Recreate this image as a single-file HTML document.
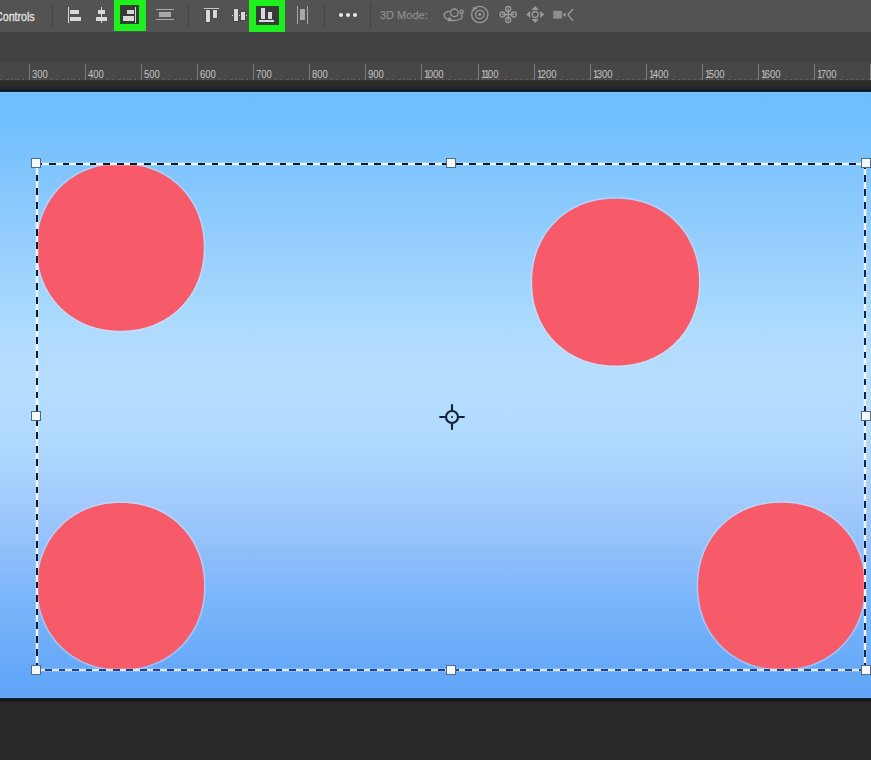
<!DOCTYPE html><html><head><meta charset="utf-8"><style>
*{margin:0;padding:0;box-sizing:border-box}
html,body{width:871px;height:760px;overflow:hidden;background:#282828;font-family:"Liberation Sans",sans-serif}
.a{position:absolute}
#tb{left:0;top:0;width:871px;height:32px;background:#535353}
#b2{left:0;top:32px;width:871px;height:31px;background:#424242}
#ru{left:0;top:63px;width:871px;height:17px;background:#474747}
#db{left:0;top:80px;width:871px;height:9px;background:linear-gradient(#323232 0,#323232 1px,#2b2b2b 1px,#2b2b2b 6px,#282526 6px,#282526 7px,#262626 7px)}
#rd{left:0;top:79px;width:871px;height:1px;background:repeating-linear-gradient(90deg,#626262 0 2px,transparent 2px 5.6px)}
#nl{left:0;top:89px;width:871px;height:3px;background:linear-gradient(#141c24,#0c2033)}
#cv{left:0;top:92px;width:871px;height:606px;background:linear-gradient(#6ebdfd 0%,#70befd 4%,#98cffd 26.4%,#a9dafe 37%,#b1dbfe 41%,#b6ddfe 46.7%,#b4dcfe 52.3%,#b0d9fe 57.4%,#a3cbfc 67.5%,#8cbdfa 77.2%,#7ab5fa 83.8%,#5ea4f8 100%)}
#nl2{left:0;top:698px;width:871px;height:2px;background:#0b1d2d}
#dk2{left:0;top:700px;width:871px;height:2px;background:#1b1c1d}
#lt{left:0;top:92px;width:871px;height:2px;background:#7cc1fc}
#lb{left:0;top:697px;width:871px;height:1px;background:#76abec}
#rb{left:0;top:702px;width:871px;height:2px;background:#2a2526}
.w{background:#d8d8d8}
.g{background:#a8a8a8}
.bx{box-shadow:0 0 0 1px #474747}
.sep{width:1px;background:#444444}
.gb{background:#1ef01e}
.gi{background:#393939;box-shadow:inset 0 0 0 1px #2c4a2c}
.rl{transform:scaleX(0.95);transform-origin:0 0;white-space:nowrap;font-size:10px;color:#c4c4c4;top:69.4px;line-height:11px}
.tk{width:1px;top:64px;height:16px;background:#7c7c7c}
.c{border-radius:50%;background:#f75b69;box-shadow:0 0 0 1px rgba(235,225,250,0.2)}
.h{background:#f6f8fc;border:1px solid #506c8c}
</style></head><body><div id="tb" class="a"></div><div id="b2" class="a"></div><div id="ru" class="a"></div><div id="db" class="a"></div><div id="rd" class="a"></div><div id="nl" class="a"></div><div id="cv" class="a"></div><div id="nl2" class="a"></div><div id="dk2" class="a"></div><div id="lt" class="a"></div><div id="lb" class="a"></div><div id="rb" class="a"></div><div class="a" style="left:-5.3px;top:8.5px;font-size:13px;line-height:15px;color:#e4e4e4;-webkit-text-stroke:0.3px #e4e4e4;white-space:nowrap;transform:scaleX(0.82);transform-origin:0 0">Controls</div><div class="a sep" style="left:52px;top:3px;width:1px;height:25px;"></div><div class="a w" style="left:68px;top:7px;width:1px;height:16px;"></div><div class="a w" style="left:70px;top:10px;width:9px;height:4px;"></div><div class="a w" style="left:70px;top:17px;width:11px;height:4px;"></div><div class="a w" style="left:101px;top:7px;width:1px;height:16px;"></div><div class="a w" style="left:98px;top:10px;width:7px;height:4px;"></div><div class="a w" style="left:96px;top:17px;width:11px;height:4px;"></div><div class="a gb" style="left:114px;top:0px;width:32px;height:31px;"></div><div class="a gi" style="left:120px;top:5px;width:19px;height:19px;"></div><div class="a w" style="left:135px;top:7px;width:1px;height:16px;"></div><div class="a w" style="left:127px;top:10px;width:7px;height:4px;"></div><div class="a w" style="left:123px;top:16px;width:11px;height:5px;"></div><div class="a g" style="left:156px;top:9px;width:18px;height:1px;"></div><div class="a g" style="left:159px;top:12px;width:12px;height:5px;"></div><div class="a g" style="left:156px;top:19px;width:18px;height:1px;"></div><div class="a sep" style="left:188px;top:3px;width:1px;height:25px;"></div><div class="a w" style="left:204px;top:8px;width:15px;height:1px;background:#c8c8c8"></div><div class="a w bx" style="left:206px;top:10px;width:4px;height:12px;"></div><div class="a w bx" style="left:212.5px;top:10px;width:4px;height:7.5px;"></div><div class="a w" style="left:232px;top:15px;width:15px;height:1px;"></div><div class="a w bx" style="left:234px;top:9px;width:4px;height:12px;"></div><div class="a w bx" style="left:240.5px;top:12px;width:4px;height:7.5px;"></div><div class="a gb" style="left:249px;top:0px;width:36px;height:32px;"></div><div class="a gi" style="left:256px;top:6px;width:23px;height:19px;"></div><div class="a w" style="left:261px;top:8px;width:4px;height:11px;"></div><div class="a w" style="left:268px;top:12px;width:4px;height:7px;"></div><div class="a w" style="left:259px;top:20px;width:15px;height:2px;"></div><div class="a g" style="left:297px;top:6px;width:1px;height:18px;"></div><div class="a g" style="left:307px;top:6px;width:1px;height:18px;"></div><div class="a g" style="left:300px;top:9px;width:5px;height:11px;"></div><div class="a sep" style="left:324px;top:3px;width:1px;height:25px;"></div><div class="a" style="left:338.5px;top:13px;width:4px;height:4px;border-radius:50%;background:#e8e8e8"></div><div class="a" style="left:345.5px;top:13px;width:4px;height:4px;border-radius:50%;background:#e8e8e8"></div><div class="a" style="left:352.5px;top:13px;width:4px;height:4px;border-radius:50%;background:#e8e8e8"></div><div class="a sep" style="left:370px;top:3px;width:1px;height:25px;"></div><div class="a" style="left:380px;top:9px;font-size:11px;line-height:13px;color:#8c8c8c;-webkit-text-stroke:0.25px #8c8c8c;white-space:nowrap">3D Mode:</div><svg class="a" style="left:436px;top:0px" width="150" height="32" viewBox="436 0 150 32">
<g fill="none" stroke="#9a9a9a" stroke-width="1.3">
<circle cx="454.4" cy="12.8" r="3.8"/>
<path d="M450.5 11.2 C444 11.5 442.5 15.5 446 18.5 C449 21 456 21.5 460.5 19 C463 17.5 462.5 15 460.5 14"/>
<circle cx="461.6" cy="11.8" r="1.6"/>
<circle cx="479.8" cy="14.5" r="8.2"/>
<circle cx="479.8" cy="14.5" r="4.2"/><circle cx="479.8" cy="14.5" r="0.8" fill="#9a9a9a"/>
<path d="M508.2 8.5 V20.5 M502.2 14.5 H514.2"/>
<circle cx="508.2" cy="9" r="2.5"/><circle cx="508.2" cy="20" r="2.5"/><circle cx="502.5" cy="14.5" r="2.5"/><circle cx="513.9" cy="14.5" r="2.5"/>
<circle cx="535.2" cy="14.5" r="3"/>
<path d="M567.8 14.7 L573 9 M567.8 14.7 L573 20.6"/>
</g>
<g fill="#9a9a9a">
<path d="M447.5 21.5 L449 16.8 L453 20.5 Z"/>
<path d="M472.6 11.2 L473.2 6.8 L477.2 8.6 Z"/>
<path d="M535.2 6 L538.8 10 H531.6 Z M535.2 23 L538.8 19 H531.6 Z M526.2 14.5 L530.2 10.9 V18.1 Z M544.2 14.5 L540.2 10.9 V18.1 Z"/>

<rect x="553.3" y="10.9" width="8.7" height="7.8" fill="#8e8e8e"/>
<path d="M562.4 14.8 L565.6 12.5 V17.1 Z"/>
</g>
</svg><div class="a tk" style="left:29px;top:64px;width:1px;height:16px;"></div><div class="a rl" style="left:32px">300</div><div class="a tk" style="left:85px;top:64px;width:1px;height:16px;"></div><div class="a rl" style="left:88px">400</div><div class="a tk" style="left:141px;top:64px;width:1px;height:16px;"></div><div class="a rl" style="left:144px">500</div><div class="a tk" style="left:197px;top:64px;width:1px;height:16px;"></div><div class="a rl" style="left:200px">600</div><div class="a tk" style="left:253px;top:64px;width:1px;height:16px;"></div><div class="a rl" style="left:256px">700</div><div class="a tk" style="left:309px;top:64px;width:1px;height:16px;"></div><div class="a rl" style="left:312px">800</div><div class="a tk" style="left:365px;top:64px;width:1px;height:16px;"></div><div class="a rl" style="left:368px">900</div><div class="a tk" style="left:421px;top:64px;width:1px;height:16px;"></div><div class="a rl" style="left:424px"><span style="letter-spacing:-1.6px">1</span>000</div><div class="a tk" style="left:478px;top:64px;width:1px;height:16px;"></div><div class="a rl" style="left:481px"><span style="letter-spacing:-1.6px">1</span><span style="letter-spacing:-1.6px">1</span>00</div><div class="a tk" style="left:534px;top:64px;width:1px;height:16px;"></div><div class="a rl" style="left:537px"><span style="letter-spacing:-1.6px">1</span>200</div><div class="a tk" style="left:590px;top:64px;width:1px;height:16px;"></div><div class="a rl" style="left:593px"><span style="letter-spacing:-1.6px">1</span>300</div><div class="a tk" style="left:646px;top:64px;width:1px;height:16px;"></div><div class="a rl" style="left:649px"><span style="letter-spacing:-1.6px">1</span>400</div><div class="a tk" style="left:702px;top:64px;width:1px;height:16px;"></div><div class="a rl" style="left:705px"><span style="letter-spacing:-1.6px">1</span>500</div><div class="a tk" style="left:758px;top:64px;width:1px;height:16px;"></div><div class="a rl" style="left:761px"><span style="letter-spacing:-1.6px">1</span>600</div><div class="a tk" style="left:814px;top:64px;width:1px;height:16px;"></div><div class="a rl" style="left:817px"><span style="letter-spacing:-1.6px">1</span>700</div><div class="a tk" style="left:870px;top:64px;width:1px;height:16px;"></div><div class="a rl" style="left:873px"><span style="letter-spacing:-1.6px">1</span>800</div><div class="a" style="left:0.96px;top:73px;width:1px;height:7px;background:#505050"></div><div class="a" style="left:7.97px;top:78px;width:1px;height:2px;background:#555555"></div><div class="a" style="left:14.98px;top:78px;width:1px;height:2px;background:#555555"></div><div class="a" style="left:21.99px;top:78px;width:1px;height:2px;background:#555555"></div><div class="a" style="left:36.01px;top:78px;width:1px;height:2px;background:#555555"></div><div class="a" style="left:43.02px;top:78px;width:1px;height:2px;background:#555555"></div><div class="a" style="left:50.03px;top:78px;width:1px;height:2px;background:#555555"></div><div class="a" style="left:57.03px;top:73px;width:1px;height:7px;background:#505050"></div><div class="a" style="left:64.04px;top:78px;width:1px;height:2px;background:#555555"></div><div class="a" style="left:71.05px;top:78px;width:1px;height:2px;background:#555555"></div><div class="a" style="left:78.06px;top:78px;width:1px;height:2px;background:#555555"></div><div class="a" style="left:92.08px;top:78px;width:1px;height:2px;background:#555555"></div><div class="a" style="left:99.09px;top:78px;width:1px;height:2px;background:#555555"></div><div class="a" style="left:106.10px;top:78px;width:1px;height:2px;background:#555555"></div><div class="a" style="left:113.10px;top:73px;width:1px;height:7px;background:#505050"></div><div class="a" style="left:120.11px;top:78px;width:1px;height:2px;background:#555555"></div><div class="a" style="left:127.12px;top:78px;width:1px;height:2px;background:#555555"></div><div class="a" style="left:134.13px;top:78px;width:1px;height:2px;background:#555555"></div><div class="a" style="left:148.15px;top:78px;width:1px;height:2px;background:#555555"></div><div class="a" style="left:155.16px;top:78px;width:1px;height:2px;background:#555555"></div><div class="a" style="left:162.17px;top:78px;width:1px;height:2px;background:#555555"></div><div class="a" style="left:169.17px;top:73px;width:1px;height:7px;background:#505050"></div><div class="a" style="left:176.18px;top:78px;width:1px;height:2px;background:#555555"></div><div class="a" style="left:183.19px;top:78px;width:1px;height:2px;background:#555555"></div><div class="a" style="left:190.20px;top:78px;width:1px;height:2px;background:#555555"></div><div class="a" style="left:204.22px;top:78px;width:1px;height:2px;background:#555555"></div><div class="a" style="left:211.23px;top:78px;width:1px;height:2px;background:#555555"></div><div class="a" style="left:218.24px;top:78px;width:1px;height:2px;background:#555555"></div><div class="a" style="left:225.25px;top:73px;width:1px;height:7px;background:#505050"></div><div class="a" style="left:232.25px;top:78px;width:1px;height:2px;background:#555555"></div><div class="a" style="left:239.26px;top:78px;width:1px;height:2px;background:#555555"></div><div class="a" style="left:246.27px;top:78px;width:1px;height:2px;background:#555555"></div><div class="a" style="left:260.29px;top:78px;width:1px;height:2px;background:#555555"></div><div class="a" style="left:267.30px;top:78px;width:1px;height:2px;background:#555555"></div><div class="a" style="left:274.31px;top:78px;width:1px;height:2px;background:#555555"></div><div class="a" style="left:281.31px;top:73px;width:1px;height:7px;background:#505050"></div><div class="a" style="left:288.32px;top:78px;width:1px;height:2px;background:#555555"></div><div class="a" style="left:295.33px;top:78px;width:1px;height:2px;background:#555555"></div><div class="a" style="left:302.34px;top:78px;width:1px;height:2px;background:#555555"></div><div class="a" style="left:316.36px;top:78px;width:1px;height:2px;background:#555555"></div><div class="a" style="left:323.37px;top:78px;width:1px;height:2px;background:#555555"></div><div class="a" style="left:330.38px;top:78px;width:1px;height:2px;background:#555555"></div><div class="a" style="left:337.39px;top:73px;width:1px;height:7px;background:#505050"></div><div class="a" style="left:344.39px;top:78px;width:1px;height:2px;background:#555555"></div><div class="a" style="left:351.40px;top:78px;width:1px;height:2px;background:#555555"></div><div class="a" style="left:358.41px;top:78px;width:1px;height:2px;background:#555555"></div><div class="a" style="left:372.43px;top:78px;width:1px;height:2px;background:#555555"></div><div class="a" style="left:379.44px;top:78px;width:1px;height:2px;background:#555555"></div><div class="a" style="left:386.45px;top:78px;width:1px;height:2px;background:#555555"></div><div class="a" style="left:393.46px;top:73px;width:1px;height:7px;background:#505050"></div><div class="a" style="left:400.46px;top:78px;width:1px;height:2px;background:#555555"></div><div class="a" style="left:407.47px;top:78px;width:1px;height:2px;background:#555555"></div><div class="a" style="left:414.48px;top:78px;width:1px;height:2px;background:#555555"></div><div class="a" style="left:428.50px;top:78px;width:1px;height:2px;background:#555555"></div><div class="a" style="left:435.51px;top:78px;width:1px;height:2px;background:#555555"></div><div class="a" style="left:442.52px;top:78px;width:1px;height:2px;background:#555555"></div><div class="a" style="left:449.53px;top:73px;width:1px;height:7px;background:#505050"></div><div class="a" style="left:456.53px;top:78px;width:1px;height:2px;background:#555555"></div><div class="a" style="left:463.54px;top:78px;width:1px;height:2px;background:#555555"></div><div class="a" style="left:470.55px;top:78px;width:1px;height:2px;background:#555555"></div><div class="a" style="left:484.57px;top:78px;width:1px;height:2px;background:#555555"></div><div class="a" style="left:491.58px;top:78px;width:1px;height:2px;background:#555555"></div><div class="a" style="left:498.59px;top:78px;width:1px;height:2px;background:#555555"></div><div class="a" style="left:505.60px;top:73px;width:1px;height:7px;background:#505050"></div><div class="a" style="left:512.60px;top:78px;width:1px;height:2px;background:#555555"></div><div class="a" style="left:519.61px;top:78px;width:1px;height:2px;background:#555555"></div><div class="a" style="left:526.62px;top:78px;width:1px;height:2px;background:#555555"></div><div class="a" style="left:540.64px;top:78px;width:1px;height:2px;background:#555555"></div><div class="a" style="left:547.65px;top:78px;width:1px;height:2px;background:#555555"></div><div class="a" style="left:554.66px;top:78px;width:1px;height:2px;background:#555555"></div><div class="a" style="left:561.66px;top:73px;width:1px;height:7px;background:#505050"></div><div class="a" style="left:568.67px;top:78px;width:1px;height:2px;background:#555555"></div><div class="a" style="left:575.68px;top:78px;width:1px;height:2px;background:#555555"></div><div class="a" style="left:582.69px;top:78px;width:1px;height:2px;background:#555555"></div><div class="a" style="left:596.71px;top:78px;width:1px;height:2px;background:#555555"></div><div class="a" style="left:603.72px;top:78px;width:1px;height:2px;background:#555555"></div><div class="a" style="left:610.73px;top:78px;width:1px;height:2px;background:#555555"></div><div class="a" style="left:617.74px;top:73px;width:1px;height:7px;background:#505050"></div><div class="a" style="left:624.74px;top:78px;width:1px;height:2px;background:#555555"></div><div class="a" style="left:631.75px;top:78px;width:1px;height:2px;background:#555555"></div><div class="a" style="left:638.76px;top:78px;width:1px;height:2px;background:#555555"></div><div class="a" style="left:652.78px;top:78px;width:1px;height:2px;background:#555555"></div><div class="a" style="left:659.79px;top:78px;width:1px;height:2px;background:#555555"></div><div class="a" style="left:666.80px;top:78px;width:1px;height:2px;background:#555555"></div><div class="a" style="left:673.80px;top:73px;width:1px;height:7px;background:#505050"></div><div class="a" style="left:680.81px;top:78px;width:1px;height:2px;background:#555555"></div><div class="a" style="left:687.82px;top:78px;width:1px;height:2px;background:#555555"></div><div class="a" style="left:694.83px;top:78px;width:1px;height:2px;background:#555555"></div><div class="a" style="left:708.85px;top:78px;width:1px;height:2px;background:#555555"></div><div class="a" style="left:715.86px;top:78px;width:1px;height:2px;background:#555555"></div><div class="a" style="left:722.87px;top:78px;width:1px;height:2px;background:#555555"></div><div class="a" style="left:729.88px;top:73px;width:1px;height:7px;background:#505050"></div><div class="a" style="left:736.88px;top:78px;width:1px;height:2px;background:#555555"></div><div class="a" style="left:743.89px;top:78px;width:1px;height:2px;background:#555555"></div><div class="a" style="left:750.90px;top:78px;width:1px;height:2px;background:#555555"></div><div class="a" style="left:764.92px;top:78px;width:1px;height:2px;background:#555555"></div><div class="a" style="left:771.93px;top:78px;width:1px;height:2px;background:#555555"></div><div class="a" style="left:778.94px;top:78px;width:1px;height:2px;background:#555555"></div><div class="a" style="left:785.94px;top:73px;width:1px;height:7px;background:#505050"></div><div class="a" style="left:792.95px;top:78px;width:1px;height:2px;background:#555555"></div><div class="a" style="left:799.96px;top:78px;width:1px;height:2px;background:#555555"></div><div class="a" style="left:806.97px;top:78px;width:1px;height:2px;background:#555555"></div><div class="a" style="left:820.99px;top:78px;width:1px;height:2px;background:#555555"></div><div class="a" style="left:828.00px;top:78px;width:1px;height:2px;background:#555555"></div><div class="a" style="left:835.01px;top:78px;width:1px;height:2px;background:#555555"></div><div class="a" style="left:842.01px;top:73px;width:1px;height:7px;background:#505050"></div><div class="a" style="left:849.02px;top:78px;width:1px;height:2px;background:#555555"></div><div class="a" style="left:856.03px;top:78px;width:1px;height:2px;background:#555555"></div><div class="a" style="left:863.04px;top:78px;width:1px;height:2px;background:#555555"></div><svg class="a" style="left:0;top:0" width="871" height="760" viewBox="0 0 871 760"><g fill="#f75b69" stroke="rgba(228,222,250,0.45)" stroke-width="3.2" paint-order="stroke"><path d="M203.70 247.40 L203.67 249.99 L203.59 252.42 L203.46 254.78 L203.27 257.10 L203.02 259.38 L202.72 261.63 L202.37 263.86 L201.97 266.06 L201.51 268.24 L200.99 270.39 L200.43 272.52 L199.81 274.62 L199.14 276.70 L198.42 278.75 L197.65 280.77 L196.83 282.76 L195.95 284.73 L195.03 286.67 L194.06 288.57 L193.04 290.45 L191.97 292.29 L190.85 294.10 L189.68 295.88 L188.47 297.62 L187.22 299.32 L185.92 300.99 L184.57 302.62 L183.19 304.22 L181.75 305.77 L180.28 307.28 L178.77 308.75 L177.22 310.19 L175.62 311.57 L173.99 312.92 L172.32 314.22 L170.62 315.47 L168.88 316.68 L167.10 317.85 L165.29 318.97 L163.45 320.04 L161.57 321.06 L159.67 322.03 L157.73 322.95 L155.76 323.83 L153.77 324.65 L151.75 325.42 L149.70 326.14 L147.62 326.81 L145.52 327.43 L143.39 327.99 L141.24 328.51 L139.06 328.97 L136.86 329.37 L134.63 329.72 L132.38 330.02 L130.10 330.27 L127.78 330.46 L125.42 330.59 L122.99 330.67 L120.40 330.70 L117.81 330.67 L115.38 330.59 L113.02 330.46 L110.70 330.27 L108.42 330.02 L106.17 329.72 L103.94 329.37 L101.74 328.97 L99.56 328.51 L97.41 327.99 L95.28 327.43 L93.18 326.81 L91.10 326.14 L89.05 325.42 L87.03 324.65 L85.04 323.83 L83.07 322.95 L81.13 322.03 L79.23 321.06 L77.35 320.04 L75.51 318.97 L73.70 317.85 L71.92 316.68 L70.18 315.47 L68.48 314.22 L66.81 312.92 L65.18 311.57 L63.58 310.19 L62.03 308.75 L60.52 307.28 L59.05 305.77 L57.61 304.22 L56.23 302.62 L54.88 300.99 L53.58 299.32 L52.33 297.62 L51.12 295.88 L49.95 294.10 L48.83 292.29 L47.76 290.45 L46.74 288.57 L45.77 286.67 L44.85 284.73 L43.97 282.76 L43.15 280.77 L42.38 278.75 L41.66 276.70 L40.99 274.62 L40.37 272.52 L39.81 270.39 L39.29 268.24 L38.83 266.06 L38.43 263.86 L38.08 261.63 L37.78 259.38 L37.53 257.10 L37.34 254.78 L37.21 252.42 L37.13 249.99 L37.10 247.40 L37.13 244.81 L37.21 242.38 L37.34 240.02 L37.53 237.70 L37.78 235.42 L38.08 233.17 L38.43 230.94 L38.83 228.74 L39.29 226.56 L39.81 224.41 L40.37 222.28 L40.99 220.18 L41.66 218.10 L42.38 216.05 L43.15 214.03 L43.97 212.04 L44.85 210.07 L45.77 208.13 L46.74 206.23 L47.76 204.35 L48.83 202.51 L49.95 200.70 L51.12 198.92 L52.33 197.18 L53.58 195.48 L54.88 193.81 L56.23 192.18 L57.61 190.58 L59.05 189.03 L60.52 187.52 L62.03 186.05 L63.58 184.61 L65.18 183.23 L66.81 181.88 L68.48 180.58 L70.18 179.33 L71.92 178.12 L73.70 176.95 L75.51 175.83 L77.35 174.76 L79.23 173.74 L81.13 172.77 L83.07 171.85 L85.04 170.97 L87.03 170.15 L89.05 169.38 L91.10 168.66 L93.18 167.99 L95.28 167.37 L97.41 166.81 L99.56 166.29 L101.74 165.83 L103.94 165.43 L106.17 165.08 L108.42 164.78 L110.70 164.53 L113.02 164.34 L115.38 164.21 L117.81 164.13 L120.40 164.10 L122.99 164.13 L125.42 164.21 L127.78 164.34 L130.10 164.53 L132.38 164.78 L134.63 165.08 L136.86 165.43 L139.06 165.83 L141.24 166.29 L143.39 166.81 L145.52 167.37 L147.62 167.99 L149.70 168.66 L151.75 169.38 L153.77 170.15 L155.76 170.97 L157.73 171.85 L159.67 172.77 L161.57 173.74 L163.45 174.76 L165.29 175.83 L167.10 176.95 L168.88 178.12 L170.62 179.33 L172.32 180.58 L173.99 181.88 L175.62 183.23 L177.22 184.61 L178.77 186.05 L180.28 187.52 L181.75 189.03 L183.19 190.58 L184.57 192.18 L185.92 193.81 L187.22 195.48 L188.47 197.18 L189.68 198.92 L190.85 200.70 L191.97 202.51 L193.04 204.35 L194.06 206.23 L195.03 208.13 L195.95 210.07 L196.83 212.04 L197.65 214.03 L198.42 216.05 L199.14 218.10 L199.81 220.18 L200.43 222.28 L200.99 224.41 L201.51 226.56 L201.97 228.74 L202.37 230.94 L202.72 233.17 L203.02 235.42 L203.27 237.70 L203.46 240.02 L203.59 242.38 L203.67 244.81Z"/><path d="M699.00 282.10 L698.97 284.70 L698.89 287.12 L698.76 289.49 L698.56 291.81 L698.32 294.09 L698.02 296.35 L697.67 298.58 L697.26 300.79 L696.80 302.97 L696.29 305.12 L695.73 307.25 L695.11 309.35 L694.44 311.43 L693.72 313.48 L692.94 315.51 L692.12 317.51 L691.24 319.47 L690.32 321.41 L689.35 323.32 L688.32 325.20 L687.25 327.04 L686.13 328.86 L684.97 330.63 L683.76 332.38 L682.50 334.08 L681.20 335.76 L679.85 337.39 L678.46 338.98 L677.03 340.54 L675.55 342.05 L674.04 343.53 L672.48 344.96 L670.89 346.35 L669.26 347.70 L667.58 349.00 L665.88 350.26 L664.13 351.47 L662.36 352.63 L660.54 353.75 L658.70 354.82 L656.82 355.85 L654.91 356.82 L652.97 357.74 L651.01 358.62 L649.01 359.44 L646.98 360.22 L644.93 360.94 L642.85 361.61 L640.75 362.23 L638.62 362.79 L636.47 363.30 L634.29 363.76 L632.08 364.17 L629.85 364.52 L627.59 364.82 L625.31 365.06 L622.99 365.26 L620.62 365.39 L618.20 365.47 L615.60 365.50 L613.00 365.47 L610.58 365.39 L608.21 365.26 L605.89 365.06 L603.61 364.82 L601.35 364.52 L599.12 364.17 L596.91 363.76 L594.73 363.30 L592.58 362.79 L590.45 362.23 L588.35 361.61 L586.27 360.94 L584.22 360.22 L582.19 359.44 L580.19 358.62 L578.23 357.74 L576.29 356.82 L574.38 355.85 L572.50 354.82 L570.66 353.75 L568.84 352.63 L567.07 351.47 L565.32 350.26 L563.62 349.00 L561.94 347.70 L560.31 346.35 L558.72 344.96 L557.16 343.53 L555.65 342.05 L554.17 340.54 L552.74 338.98 L551.35 337.39 L550.00 335.76 L548.70 334.08 L547.44 332.38 L546.23 330.63 L545.07 328.86 L543.95 327.04 L542.88 325.20 L541.85 323.32 L540.88 321.41 L539.96 319.47 L539.08 317.51 L538.26 315.51 L537.48 313.48 L536.76 311.43 L536.09 309.35 L535.47 307.25 L534.91 305.12 L534.40 302.97 L533.94 300.79 L533.53 298.58 L533.18 296.35 L532.88 294.09 L532.64 291.81 L532.44 289.49 L532.31 287.12 L532.23 284.70 L532.20 282.10 L532.23 279.50 L532.31 277.08 L532.44 274.71 L532.64 272.39 L532.88 270.11 L533.18 267.85 L533.53 265.62 L533.94 263.41 L534.40 261.23 L534.91 259.08 L535.47 256.95 L536.09 254.85 L536.76 252.77 L537.48 250.72 L538.26 248.69 L539.08 246.69 L539.96 244.73 L540.88 242.79 L541.85 240.88 L542.88 239.00 L543.95 237.16 L545.07 235.34 L546.23 233.57 L547.44 231.82 L548.70 230.12 L550.00 228.44 L551.35 226.81 L552.74 225.22 L554.17 223.66 L555.65 222.15 L557.16 220.67 L558.72 219.24 L560.31 217.85 L561.94 216.50 L563.62 215.20 L565.32 213.94 L567.07 212.73 L568.84 211.57 L570.66 210.45 L572.50 209.38 L574.38 208.35 L576.29 207.38 L578.23 206.46 L580.19 205.58 L582.19 204.76 L584.22 203.98 L586.27 203.26 L588.35 202.59 L590.45 201.97 L592.58 201.41 L594.73 200.90 L596.91 200.44 L599.12 200.03 L601.35 199.68 L603.61 199.38 L605.89 199.14 L608.21 198.94 L610.58 198.81 L613.00 198.73 L615.60 198.70 L618.20 198.73 L620.62 198.81 L622.99 198.94 L625.31 199.14 L627.59 199.38 L629.85 199.68 L632.08 200.03 L634.29 200.44 L636.47 200.90 L638.62 201.41 L640.75 201.97 L642.85 202.59 L644.93 203.26 L646.98 203.98 L649.01 204.76 L651.01 205.58 L652.97 206.46 L654.91 207.38 L656.82 208.35 L658.70 209.38 L660.54 210.45 L662.36 211.57 L664.13 212.73 L665.88 213.94 L667.58 215.20 L669.26 216.50 L670.89 217.85 L672.48 219.24 L674.04 220.67 L675.55 222.15 L677.03 223.66 L678.46 225.22 L679.85 226.81 L681.20 228.44 L682.50 230.12 L683.76 231.82 L684.97 233.57 L686.13 235.34 L687.25 237.16 L688.32 239.00 L689.35 240.88 L690.32 242.79 L691.24 244.73 L692.12 246.69 L692.94 248.69 L693.72 250.72 L694.44 252.77 L695.11 254.85 L695.73 256.95 L696.29 259.08 L696.80 261.23 L697.26 263.41 L697.67 265.62 L698.02 267.85 L698.32 270.11 L698.56 272.39 L698.76 274.71 L698.89 277.08 L698.97 279.50Z"/><path d="M204.00 586.20 L203.97 588.79 L203.89 591.21 L203.76 593.57 L203.57 595.88 L203.32 598.17 L203.02 600.42 L202.67 602.64 L202.27 604.84 L201.81 607.02 L201.30 609.17 L200.73 611.29 L200.12 613.39 L199.45 615.46 L198.73 617.51 L197.96 619.53 L197.13 621.52 L196.26 623.49 L195.34 625.42 L194.37 627.32 L193.35 629.20 L192.28 631.04 L191.16 632.84 L190.00 634.62 L188.79 636.36 L187.54 638.06 L186.24 639.73 L184.90 641.36 L183.51 642.95 L182.08 644.50 L180.61 646.01 L179.10 647.48 L177.55 648.91 L175.96 650.30 L174.33 651.64 L172.66 652.94 L170.96 654.19 L169.22 655.40 L167.44 656.56 L165.64 657.68 L163.80 658.75 L161.92 659.77 L160.02 660.74 L158.09 661.66 L156.12 662.53 L154.13 663.36 L152.11 664.13 L150.06 664.85 L147.99 665.52 L145.89 666.13 L143.77 666.70 L141.62 667.21 L139.44 667.67 L137.24 668.07 L135.02 668.42 L132.77 668.72 L130.48 668.97 L128.17 669.16 L125.81 669.29 L123.39 669.37 L120.80 669.40 L118.21 669.37 L115.79 669.29 L113.43 669.16 L111.12 668.97 L108.83 668.72 L106.58 668.42 L104.36 668.07 L102.16 667.67 L99.98 667.21 L97.83 666.70 L95.71 666.13 L93.61 665.52 L91.54 664.85 L89.49 664.13 L87.47 663.36 L85.48 662.53 L83.51 661.66 L81.58 660.74 L79.68 659.77 L77.80 658.75 L75.96 657.68 L74.16 656.56 L72.38 655.40 L70.64 654.19 L68.94 652.94 L67.27 651.64 L65.64 650.30 L64.05 648.91 L62.50 647.48 L60.99 646.01 L59.52 644.50 L58.09 642.95 L56.70 641.36 L55.36 639.73 L54.06 638.06 L52.81 636.36 L51.60 634.62 L50.44 632.84 L49.32 631.04 L48.25 629.20 L47.23 627.32 L46.26 625.42 L45.34 623.49 L44.47 621.52 L43.64 619.53 L42.87 617.51 L42.15 615.46 L41.48 613.39 L40.87 611.29 L40.30 609.17 L39.79 607.02 L39.33 604.84 L38.93 602.64 L38.58 600.42 L38.28 598.17 L38.03 595.88 L37.84 593.57 L37.71 591.21 L37.63 588.79 L37.60 586.20 L37.63 583.61 L37.71 581.19 L37.84 578.83 L38.03 576.52 L38.28 574.23 L38.58 571.98 L38.93 569.76 L39.33 567.56 L39.79 565.38 L40.30 563.23 L40.87 561.11 L41.48 559.01 L42.15 556.94 L42.87 554.89 L43.64 552.87 L44.47 550.88 L45.34 548.91 L46.26 546.98 L47.23 545.08 L48.25 543.20 L49.32 541.36 L50.44 539.56 L51.60 537.78 L52.81 536.04 L54.06 534.34 L55.36 532.67 L56.70 531.04 L58.09 529.45 L59.52 527.90 L60.99 526.39 L62.50 524.92 L64.05 523.49 L65.64 522.10 L67.27 520.76 L68.94 519.46 L70.64 518.21 L72.38 517.00 L74.16 515.84 L75.96 514.72 L77.80 513.65 L79.68 512.63 L81.58 511.66 L83.51 510.74 L85.48 509.87 L87.47 509.04 L89.49 508.27 L91.54 507.55 L93.61 506.88 L95.71 506.27 L97.83 505.70 L99.98 505.19 L102.16 504.73 L104.36 504.33 L106.58 503.98 L108.83 503.68 L111.12 503.43 L113.43 503.24 L115.79 503.11 L118.21 503.03 L120.80 503.00 L123.39 503.03 L125.81 503.11 L128.17 503.24 L130.48 503.43 L132.77 503.68 L135.02 503.98 L137.24 504.33 L139.44 504.73 L141.62 505.19 L143.77 505.70 L145.89 506.27 L147.99 506.88 L150.06 507.55 L152.11 508.27 L154.13 509.04 L156.12 509.87 L158.09 510.74 L160.02 511.66 L161.92 512.63 L163.80 513.65 L165.64 514.72 L167.44 515.84 L169.22 517.00 L170.96 518.21 L172.66 519.46 L174.33 520.76 L175.96 522.10 L177.55 523.49 L179.10 524.92 L180.61 526.39 L182.08 527.90 L183.51 529.45 L184.90 531.04 L186.24 532.67 L187.54 534.34 L188.79 536.04 L190.00 537.78 L191.16 539.56 L192.28 541.36 L193.35 543.20 L194.37 545.08 L195.34 546.98 L196.26 548.91 L197.13 550.88 L197.96 552.87 L198.73 554.89 L199.45 556.94 L200.12 559.01 L200.73 561.11 L201.30 563.23 L201.81 565.38 L202.27 567.56 L202.67 569.76 L203.02 571.98 L203.32 574.23 L203.57 576.52 L203.76 578.83 L203.89 581.19 L203.97 583.61Z"/><path d="M864.60 586.00 L864.57 588.59 L864.49 591.01 L864.36 593.37 L864.17 595.68 L863.92 597.97 L863.62 600.22 L863.27 602.44 L862.87 604.64 L862.41 606.82 L861.90 608.97 L861.33 611.09 L860.72 613.19 L860.05 615.26 L859.33 617.31 L858.56 619.33 L857.73 621.32 L856.86 623.29 L855.94 625.22 L854.97 627.12 L853.95 629.00 L852.88 630.84 L851.76 632.64 L850.60 634.42 L849.39 636.16 L848.14 637.86 L846.84 639.53 L845.50 641.16 L844.11 642.75 L842.68 644.30 L841.21 645.81 L839.70 647.28 L838.15 648.71 L836.56 650.10 L834.93 651.44 L833.26 652.74 L831.56 653.99 L829.82 655.20 L828.04 656.36 L826.24 657.48 L824.40 658.55 L822.52 659.57 L820.62 660.54 L818.69 661.46 L816.72 662.33 L814.73 663.16 L812.71 663.93 L810.66 664.65 L808.59 665.32 L806.49 665.93 L804.37 666.50 L802.22 667.01 L800.04 667.47 L797.84 667.87 L795.62 668.22 L793.37 668.52 L791.08 668.77 L788.77 668.96 L786.41 669.09 L783.99 669.17 L781.40 669.20 L778.81 669.17 L776.39 669.09 L774.03 668.96 L771.72 668.77 L769.43 668.52 L767.18 668.22 L764.96 667.87 L762.76 667.47 L760.58 667.01 L758.43 666.50 L756.31 665.93 L754.21 665.32 L752.14 664.65 L750.09 663.93 L748.07 663.16 L746.08 662.33 L744.11 661.46 L742.18 660.54 L740.28 659.57 L738.40 658.55 L736.56 657.48 L734.76 656.36 L732.98 655.20 L731.24 653.99 L729.54 652.74 L727.87 651.44 L726.24 650.10 L724.65 648.71 L723.10 647.28 L721.59 645.81 L720.12 644.30 L718.69 642.75 L717.30 641.16 L715.96 639.53 L714.66 637.86 L713.41 636.16 L712.20 634.42 L711.04 632.64 L709.92 630.84 L708.85 629.00 L707.83 627.12 L706.86 625.22 L705.94 623.29 L705.07 621.32 L704.24 619.33 L703.47 617.31 L702.75 615.26 L702.08 613.19 L701.47 611.09 L700.90 608.97 L700.39 606.82 L699.93 604.64 L699.53 602.44 L699.18 600.22 L698.88 597.97 L698.63 595.68 L698.44 593.37 L698.31 591.01 L698.23 588.59 L698.20 586.00 L698.23 583.41 L698.31 580.99 L698.44 578.63 L698.63 576.32 L698.88 574.03 L699.18 571.78 L699.53 569.56 L699.93 567.36 L700.39 565.18 L700.90 563.03 L701.47 560.91 L702.08 558.81 L702.75 556.74 L703.47 554.69 L704.24 552.67 L705.07 550.68 L705.94 548.71 L706.86 546.78 L707.83 544.88 L708.85 543.00 L709.92 541.16 L711.04 539.36 L712.20 537.58 L713.41 535.84 L714.66 534.14 L715.96 532.47 L717.30 530.84 L718.69 529.25 L720.12 527.70 L721.59 526.19 L723.10 524.72 L724.65 523.29 L726.24 521.90 L727.87 520.56 L729.54 519.26 L731.24 518.01 L732.98 516.80 L734.76 515.64 L736.56 514.52 L738.40 513.45 L740.28 512.43 L742.18 511.46 L744.11 510.54 L746.08 509.67 L748.07 508.84 L750.09 508.07 L752.14 507.35 L754.21 506.68 L756.31 506.07 L758.43 505.50 L760.58 504.99 L762.76 504.53 L764.96 504.13 L767.18 503.78 L769.43 503.48 L771.72 503.23 L774.03 503.04 L776.39 502.91 L778.81 502.83 L781.40 502.80 L783.99 502.83 L786.41 502.91 L788.77 503.04 L791.08 503.23 L793.37 503.48 L795.62 503.78 L797.84 504.13 L800.04 504.53 L802.22 504.99 L804.37 505.50 L806.49 506.07 L808.59 506.68 L810.66 507.35 L812.71 508.07 L814.73 508.84 L816.72 509.67 L818.69 510.54 L820.62 511.46 L822.52 512.43 L824.40 513.45 L826.24 514.52 L828.04 515.64 L829.82 516.80 L831.56 518.01 L833.26 519.26 L834.93 520.56 L836.56 521.90 L838.15 523.29 L839.70 524.72 L841.21 526.19 L842.68 527.70 L844.11 529.25 L845.50 530.84 L846.84 532.47 L848.14 534.14 L849.39 535.84 L850.60 537.58 L851.76 539.36 L852.88 541.16 L853.95 543.00 L854.97 544.88 L855.94 546.78 L856.86 548.71 L857.73 550.68 L858.56 552.67 L859.33 554.69 L860.05 556.74 L860.72 558.81 L861.33 560.91 L861.90 563.03 L862.41 565.18 L862.87 567.36 L863.27 569.56 L863.62 571.78 L863.92 574.03 L864.17 576.32 L864.36 578.63 L864.49 580.99 L864.57 583.41Z"/></g></svg><div class="a" style="left:37px;top:163px;width:828px;height:2px;box-shadow:0 0 0 1px rgba(240,248,255,0.22);background:repeating-linear-gradient(90deg,#0d1a2e 12.0px,#0d1a2e 18.78px,#f4f6fa 18.78px,#f4f6fa 25.56px)"></div><div class="a" style="left:37px;top:669.2px;width:828px;height:1.6px;box-shadow:0 0 0 1px rgba(240,248,255,0.22);background:repeating-linear-gradient(90deg,#22428a 8.0px,#22428a 14.78px,#dde8fa 14.78px,#dde8fa 21.56px)"></div><div class="a" style="left:36px;top:163px;width:2px;height:507px;box-shadow:0 0 0 1px rgba(240,248,255,0.22);background:repeating-linear-gradient(180deg,#0d1a2e 11.7px,#0d1a2e 18.48px,#f4f6fa 18.48px,#f4f6fa 25.26px)"></div><div class="a" style="left:863.8px;top:163px;width:2px;height:507px;box-shadow:0 0 0 1px rgba(240,248,255,0.22);background:repeating-linear-gradient(180deg,#0c2550 12.3px,#0c2550 19.08px,#f4f6fa 19.08px,#f4f6fa 25.86px)"></div><div class="a h" style="left:31px;top:157.5px;width:10px;height:10px;"></div><div class="a h" style="left:446px;top:157.5px;width:10px;height:10px;"></div><div class="a h" style="left:860.5px;top:157.7px;width:10px;height:10px;"></div><div class="a h" style="left:31.200000000000003px;top:411px;width:10px;height:10px;"></div><div class="a h" style="left:860.5px;top:411px;width:10px;height:10px;"></div><div class="a h" style="left:31.200000000000003px;top:665px;width:10px;height:10px;"></div><div class="a h" style="left:446px;top:665px;width:10px;height:10px;"></div><div class="a h" style="left:860.5px;top:664.8px;width:10px;height:10px;"></div><svg class="a" style="left:438px;top:403.3px" width="28" height="28" viewBox="0 0 28 28"><circle cx="14" cy="14" r="6" fill="none" stroke="#15233a" stroke-width="2.2"/><path d="M14 1.3v6.7M14 20v6.7M1.3 14h6.7M20 14h6.7" stroke="#15233a" stroke-width="2.1"/><circle cx="14" cy="14" r="1" fill="#15233a"/></svg></body></html>
